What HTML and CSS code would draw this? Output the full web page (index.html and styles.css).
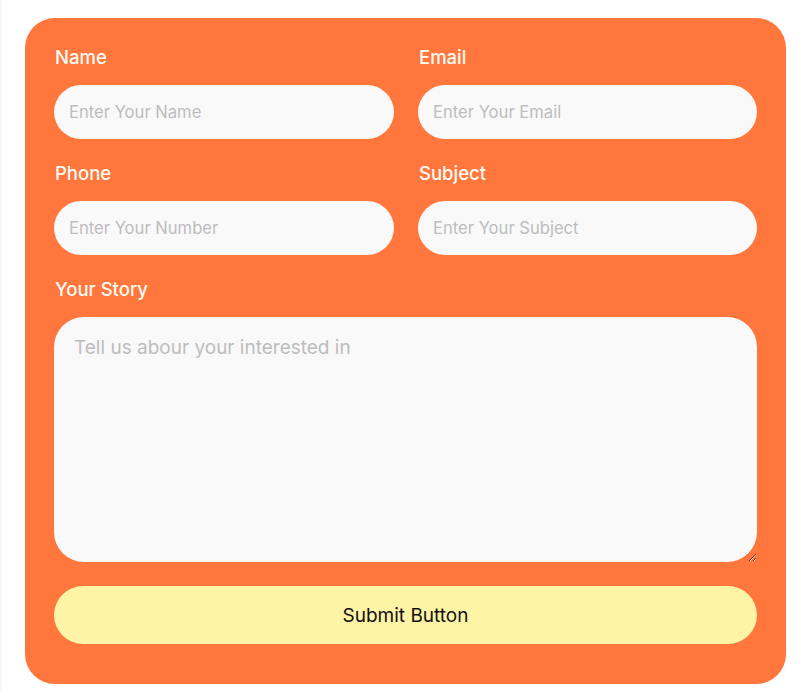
FILE: index.html
```html
<!DOCTYPE html>
<html lang="en">
<head>
<meta charset="utf-8">
<title>Contact Form</title>
<link rel="stylesheet" href="styles.css">
</head>
<body>
<div class="page">
  <form class="card">
    <div class="grid">
      <div class="field">
        <label class="label" for="name">Name</label>
        <input class="input" id="name" type="text" placeholder="Enter Your Name">
      </div>
      <div class="field">
        <label class="label" for="email">Email</label>
        <input class="input" id="email" type="email" placeholder="Enter Your Email">
      </div>
      <div class="field">
        <label class="label" for="phone">Phone</label>
        <input class="input" id="phone" type="text" placeholder="Enter Your Number">
      </div>
      <div class="field">
        <label class="label" for="subject">Subject</label>
        <input class="input" id="subject" type="text" placeholder="Enter Your Subject">
      </div>
      <div class="field full">
        <label class="label" for="story">Your Story</label>
        <textarea class="textarea" id="story" placeholder="Tell us abour your interested in"></textarea>
      </div>
    </div>
    <button class="submit" type="button">Submit Button</button>
  </form>
</div>
</body>
</html>
```

FILE: styles.css
```css
* { box-sizing: border-box; }
html, body { margin: 0; padding: 0; background: #ffffff; }
body { font-family: Inter, "Noto Sans", sans-serif; }
.page {
  width: 800px;
  height: 692px;
  padding: 18px 14px 8px 25px;
  border-left: 1px solid #f4f4f4;
}
.card {
  width: 761px;
  height: 666px;
  margin-left: -1px;
  background: #ff773d;
  border-radius: 30px;
  padding: 28px 29px 40px 29px;
  display: flex;
  flex-direction: column;
}
.grid {
  display: grid;
  grid-template-columns: 340px 339px;
  column-gap: 24px;
  row-gap: 23px;
}
.field { display: flex; flex-direction: column; }
.full { grid-column: 1 / -1; }
.label {
  color: #fffaf2;
  font-size: 18.5px;
  line-height: 22px;
  margin-bottom: 17px;
  font-weight: 500;
  padding-left: 1px;
}
.input {
  height: 54px;
  border: none;
  border-radius: 27px;
  background: #f9f9f9;
  padding: 0 15px;
  font-family: Inter, "Noto Sans", sans-serif;
  font-size: 16.6px;
  color: #333;
  outline: none;
}
.input::placeholder, .textarea::placeholder { color: #bdbdbd; }
.textarea {
  height: 245px;
  border: none;
  border-radius: 30px;
  background: #f9f9f9;
  padding: 20px 20px;
  font-family: Inter, "Noto Sans", sans-serif;
  font-size: 19px;
  line-height: 22px;
  color: #333;
  outline: none;
  resize: vertical;
}
.submit {
  flex: none;
  margin-top: 24px;
  height: 58px;
  border: none;
  border-radius: 29px;
  background: #fff3a5;
  font-family: Inter, "Noto Sans", sans-serif;
  font-size: 19px;
  color: #111;
  cursor: pointer;
}
```
